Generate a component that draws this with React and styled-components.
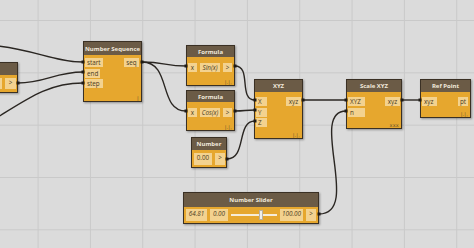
import React from "react";
import styled, { createGlobalStyle } from "styled-components";

const Global = createGlobalStyle`
  html, body { margin: 0; padding: 0; background: #dadada; }
  body { font-family: "Open Sans", "DejaVu Sans", sans-serif; }
`;

const Canvas = styled.div`
  position: relative;
  width: 474px;
  height: 248px;
  overflow: hidden;
  background-color: #dbdbdb;
  background-image:
    linear-gradient(to right, #c9c9c9 1.3px, transparent 1.3px),
    linear-gradient(to bottom, #c9c9c9 1.3px, transparent 1.3px);
  background-size: 52.33px 52.33px;
  background-position: 37.6px 20px;
`;

const Wires = styled.svg`
  position: absolute;
  left: 0;
  top: 0;
  width: 474px;
  height: 248px;
  pointer-events: none;
`;

const Dots = styled(Wires)`
  z-index: 2;
`;

const Node = styled.div`
  position: absolute;
  z-index: 1;
  left: ${(p) => p.$x}px;
  top: ${(p) => p.$y}px;
  width: ${(p) => p.$w}px;
  height: ${(p) => p.$h}px;
  box-sizing: border-box;
  display: flex;
  flex-direction: column;
  background: #e6a72e;
  border: 1px solid #3a3024;
  box-shadow: 1px 1px 2px rgba(0, 0, 0, 0.35);
`;

const Header = styled.div`
  flex: none;
  height: ${(p) => p.$h || 12}px;
  background: #6b5b46;
  color: #f1e9dc;
  font: 700 6px "Open Sans", sans-serif;
  display: flex;
  align-items: center;
  justify-content: center;
  white-space: nowrap;
  overflow: hidden;
`;

const Body = styled.div`
  flex: 1;
  position: relative;
  display: flex;
  justify-content: ${(p) => p.$justify || "space-between"};
  align-items: flex-start;
  gap: ${(p) => p.$gap || 0}px;
  padding: ${(p) => p.$pad || "2px 1px"};
`;

const Column = styled.div`
  display: flex;
  flex-direction: column;
  align-items: ${(p) => (p.$right ? "flex-end" : "flex-start")};
  gap: 1.5px;
`;

const Port = styled.div`
  box-sizing: border-box;
  height: ${(p) => p.$h || 9}px;
  line-height: ${(p) => p.$h || 9}px;
  min-width: ${(p) => p.$w || 0}px;
  padding: 0 2px;
  background: #f3d28f;
  color: #4a3b22;
  font: ${(p) => (p.$italic ? "italic" : "normal")} 6.3px "Open Sans", sans-serif;
  text-align: ${(p) => p.$align || "left"};
  white-space: nowrap;
  flex: none;
`;

const Lacing = styled.div`
  position: absolute;
  right: 2px;
  bottom: 0px;
  font: 5px "DejaVu Sans", sans-serif;
  color: #6a5530;
  letter-spacing: 0.2px;
`;

const Track = styled.div`
  position: relative;
  flex: none;
  width: 46px;
  height: 12px;
  display: flex;
  align-items: center;
  &::before {
    content: "";
    display: block;
    width: 100%;
    height: 1.5px;
    background: #f6ecd8;
  }
`;

const Thumb = styled.div`
  position: absolute;
  left: 28px;
  top: 1px;
  width: 4px;
  height: 10px;
  background: #eeeeea;
  border: 0.5px solid #b8b0a0;
  box-sizing: border-box;
`;

const wires = [
  "M -2 46 C 35 50, 55 62, 83 62",
  "M 18 83 C 45 83, 55 72, 83 72",
  "M -2 117 C 30 97, 50 83, 83 83",
  "M 142 62 C 165 62, 165 66, 186 66",
  "M 142 62 C 172 62, 158 111, 186 111",
  "M 235 66 C 252 66, 238 100, 255 100",
  "M 235 111 C 245 111, 245 110, 255 110",
  "M 227 159 C 247 159, 236 121, 255 121",
  "M 303 100 L 346 100",
  "M 319 214 C 362 214, 308 111, 346 111",
  "M 402 100 L 420 100",
];

const dots = [
  [83, 62], [83, 72], [83, 83], [18, 83],
  [142, 62], [186, 66], [186, 111],
  [235, 66], [235, 111], [255, 100], [255, 110], [255, 121],
  [227, 159], [303, 100], [346, 100], [346, 111], [319, 214],
  [402, 100], [420, 100],
];

export default function App() {
  return (
    <>
      <Global />
      <Canvas>
        <Wires viewBox="0 0 474 248">
          {wires.map((d, i) => (
            <path key={i} d={d} fill="none" stroke="#2a2622" strokeWidth="1.4" />
          ))}
        </Wires>

        <Node $x={-80} $y={62} $w={98} $h={31}>
          <Header $h={12}>Number</Header>
          <Body $justify="flex-end" $gap={3} $pad="3px 1px 0 0">
            <Port $h={11} $w={34} $align="left">0.00</Port>
            <Port $h={11} $w={11} $align="center">&gt;</Port>
          </Body>
        </Node>

        <Node $x={83} $y={41} $w={59} $h={61}>
          <Header $h={13}>Number Sequence</Header>
          <Body $pad="3px 2px 0 1px">
            <Column>
              <Port $w={18}>start</Port>
              <Port $w={14}>end</Port>
              <Port $w={18}>step</Port>
            </Column>
            <Column $right>
              <Port $w={15} $align="center">seq</Port>
            </Column>
            <Lacing>|</Lacing>
          </Body>
        </Node>

        <Node $x={186} $y={45} $w={49} $h={41}>
          <Header $h={11}>Formula</Header>
          <Body $pad="6px 2px 0 1px">
            <Port $w={9} $align="center">x</Port>
            <Port $w={20} $italic $align="center">Sin(x)</Port>
            <Port $w={9} $align="center">&gt;</Port>
            <Lacing>|.|,</Lacing>
          </Body>
        </Node>

        <Node $x={186} $y={90} $w={49} $h={41}>
          <Header $h={11}>Formula</Header>
          <Body $pad="6px 2px 0 1px">
            <Port $w={9} $align="center">x</Port>
            <Port $w={20} $italic $align="center">Cos(x)</Port>
            <Port $w={9} $align="center">&gt;</Port>
            <Lacing>|.|,</Lacing>
          </Body>
        </Node>

        <Node $x={254} $y={79} $w={49} $h={60}>
          <Header $h={12}>XYZ</Header>
          <Body $pad="5px 1px 0 1px">
            <Column>
              <Port $w={11}>X</Port>
              <Port $w={11}>Y</Port>
              <Port $w={11}>Z</Port>
            </Column>
            <Column $right>
              <Port $w={15} $align="center">xyz</Port>
            </Column>
            <Lacing>|.|,</Lacing>
          </Body>
        </Node>

        <Node $x={191} $y={137} $w={36} $h={31}>
          <Header $h={12}>Number</Header>
          <Body $justify="flex-start" $gap={3} $pad="3px 1px 0 2px">
            <Port $h={12} $w={18} $align="center">0.00</Port>
            <Port $h={12} $w={10} $align="center">&gt;</Port>
          </Body>
        </Node>

        <Node $x={346} $y={79} $w={56} $h={50}>
          <Header $h={12}>Scale XYZ</Header>
          <Body $pad="5px 1px 0 1px">
            <Column>
              <Port $w={17}>XYZ</Port>
              <Port $w={17}>n</Port>
            </Column>
            <Column $right>
              <Port $w={15} $align="center">xyz</Port>
            </Column>
            <Lacing>xxx</Lacing>
          </Body>
        </Node>

        <Node $x={420} $y={79} $w={51} $h={39}>
          <Header $h={12}>Ref Point</Header>
          <Body $pad="5px 2px 0 1px">
            <Column>
              <Port $w={15}>xyz</Port>
            </Column>
            <Column $right>
              <Port $w={10} $align="center">pt</Port>
            </Column>
            <Lacing>|.|,</Lacing>
          </Body>
        </Node>

        <Node $x={183} $y={192} $w={136} $h={32}>
          <Header $h={14}>Number Slider</Header>
          <Body $justify="flex-start" $gap={3} $pad="2px 1px 0 2px">
            <Port $h={12} $w={21} $italic $align="center">64.81</Port>
            <Port $h={12} $w={18} $italic $align="center">0.00</Port>
            <Track>
              <Thumb />
            </Track>
            <Port $h={12} $w={23} $italic $align="center">100.00</Port>
            <Port $h={12} $w={10} $align="center">&gt;</Port>
          </Body>
        </Node>

        <Dots viewBox="0 0 474 248">
          {dots.map(([x, y], i) => (
            <rect key={i} x={x - 1.5} y={y - 1.5} width="3" height="3" fill="#1e1a16" />
          ))}
        </Dots>
      </Canvas>
    </>
  );
}
